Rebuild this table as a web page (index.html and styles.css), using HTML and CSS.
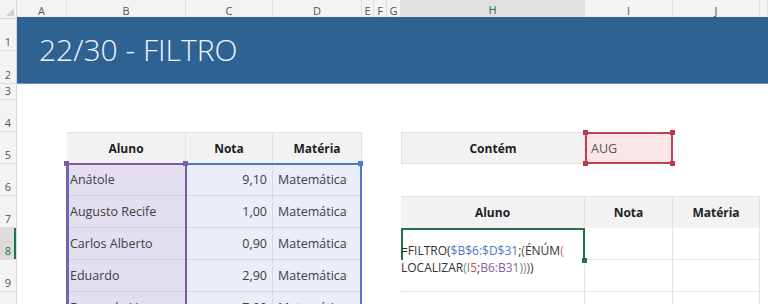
FILE: index.html
```html
<!DOCTYPE html>
<html lang="pt">
<head>
<meta charset="utf-8">
<title>22/30 - FILTRO</title>
<link rel="stylesheet" href="styles.css">
</head>
<body>
<div class="app">
  <div class="colheads">
    <div class="corner"><span class="tri"></span></div>
    <div class="colh">A</div>
    <div class="colh">B</div>
    <div class="colh">C</div>
    <div class="colh">D</div>
    <div class="colh">E</div>
    <div class="colh">F</div>
    <div class="colh">G</div>
    <div class="colh sel">H</div>
    <div class="colh">I</div>
    <div class="colh">J</div>
    <div class="colh"></div>
  </div>
  <div class="main">
    <div class="rowheads">
      <div class="rowh">1</div>
      <div class="rowh">2</div>
      <div class="rowh">3</div>
      <div class="rowh">4</div>
      <div class="rowh">5</div>
      <div class="rowh">6</div>
      <div class="rowh">7</div>
      <div class="rowh sel">8</div>
      <div class="rowh">9</div>
      <div class="rowh"></div>
    </div>
    <div class="cells">
      <div class="banner"><span class="title">22/30 - FILTRO</span></div>

      <div class="ltable">
        <div class="th">Aluno</div>
        <div class="th">Nota</div>
        <div class="th">Matéria</div>

        <div class="td name">Anátole</div>
        <div class="td num">9,10</div>
        <div class="td subj">Matemática</div>

        <div class="td name">Augusto Recife</div>
        <div class="td num">1,00</div>
        <div class="td subj">Matemática</div>

        <div class="td name">Carlos Alberto</div>
        <div class="td num">0,90</div>
        <div class="td subj">Matemática</div>

        <div class="td name">Eduardo</div>
        <div class="td num">2,90</div>
        <div class="td subj">Matemática</div>

        <div class="td name">Fernanda Lima</div>
        <div class="td num">7,00</div>
        <div class="td subj">Matemática</div>

        <div class="ref ref-blue"></div>
        <div class="ref ref-purple"></div>
        <span class="hnd hp1"></span>
        <span class="hnd hp2"></span>
        <span class="hnd hb1"></span>
      </div>

      <div class="contem">
        <div class="ch">Contém</div>
        <div class="cv">AUG
          <span class="hnd hr tl"></span>
          <span class="hnd hr tr"></span>
          <span class="hnd hr bl"></span>
          <span class="hnd hr br"></span>
        </div>
      </div>

      <div class="rtable">
        <div class="rth">Aluno</div>
        <div class="rth">Nota</div>
        <div class="rth">Matéria</div>

        <div class="active">
          <div class="editor">
            <div>=FILTRO(<span class="fb">$B$6:$D$31</span>;<span class="p1">(</span>ÉNÚM<span class="p2">(</span></div>
            <div>LOCALIZAR<span class="p3">(</span><span class="fr">I5</span>;<span class="fp">B6:B31</span><span class="p3">)</span><span class="p2">)</span><span class="p1">)</span>)</div>
          </div>
          <span class="hnd hg"></span>
        </div>
        <div class="rtd"></div>
        <div class="rtd"></div>

        <div class="rtd"></div>
        <div class="rtd"></div>
        <div class="rtd"></div>

        <div class="rtd"></div>
        <div class="rtd"></div>
        <div class="rtd"></div>
      </div>
    </div>
  </div>
</div>
</body>
</html>
```
FILE: styles.css
```css
* { box-sizing: border-box; }

body {
  margin: 0;
  width: 768px;
  height: 304px;
  overflow: hidden;
  background: #ffffff;
  font-family: "Open Sans", "DejaVu Sans", sans-serif;
}

.app {
  display: flex;
  flex-direction: column;
  width: 768px;
}

/* column headers */
.colheads {
  display: grid;
  grid-template-columns: 17px 50px 119px 87px 89px 12px 13px 14px 184px 88px 87px 1fr;
  height: 17px;
  background: #f3f3f3;
}

.corner {
  position: relative;
  border-right: 1px solid #d6d6d6;
  border-bottom: 1px solid #d6d6d6;
}

.tri {
  position: absolute;
  right: 2px;
  bottom: 2px;
  width: 0;
  height: 0;
  border-left: 8px solid transparent;
  border-bottom: 8px solid #d0d0d0;
}

.colh {
  display: flex;
  align-items: center;
  justify-content: center;
  padding-top: 2px;
  font-size: 11px;
  color: #555555;
  border-right: 1px solid #e0e0e0;
  border-bottom: 1px solid #d6d6d6;
}

.colh.sel {
  background: #e1e1e1;
  color: #217346;
  border-bottom: 2px solid #217346;
}

/* body */
.main {
  display: flex;
}

.rowheads {
  display: grid;
  grid-template-rows: 34px 33px 16px repeat(7, 32px);
  width: 17px;
  flex: none;
  background: #f3f3f3;
  border-right: 1px solid #d6d6d6;
}

.rowh {
  display: flex;
  align-items: flex-end;
  justify-content: center;
  padding-bottom: 1px;
  font-size: 11px;
  line-height: 14px;
  color: #555555;
  border-bottom: 1px solid #e0e0e0;
}

.rowh.sel {
  background: #dcdcdc;
  color: #217346;
  box-shadow: inset -2px 0 0 #217346;
}

.cells {
  flex: 1;
  display: grid;
  grid-template-columns: 50px 119px 87px 89px 12px 13px 14px 184px 88px 87px 1fr;
  grid-template-rows: 34px 33px 16px repeat(7, 32px);
}

.banner {
  grid-column: 1 / -1;
  grid-row: 1 / 3;
  display: flex;
  align-items: center;
  padding-left: 22px;
  background: #2e6292;
  border-bottom: 1px solid #6f94b8;
}

.title {
  font-size: 30px;
  font-weight: 300;
  line-height: 30px;
  color: #eef4fa;
}

/* left table */
.ltable {
  grid-column: 2 / 5;
  grid-row: 5 / 11;
  display: grid;
  grid-template-columns: 119px 87px 89px;
  grid-template-rows: repeat(6, 32px);
  position: relative;
}

.th, .rth, .ch {
  display: flex;
  align-items: center;
  justify-content: center;
  background: #f2f2f2;
  font-size: 12px;
  font-weight: 700;
  color: #1e1e1e;
  border-top: 1px solid #e3e3e3;
  border-right: 1px solid #e3e3e3;
}

.td {
  display: flex;
  align-items: center;
  font-size: 12.5px;
  color: #404040;
  white-space: nowrap;
  border-bottom: 1px solid #d3d9e6;
}

.td.name {
  padding-left: 3px;
  background: #e4dff0;
  border-bottom-color: #d2cce2;
}

.td.num {
  justify-content: flex-end;
  padding-right: 5px;
  background: #e9eef8;
  border-right: 1px solid #d3d9e6;
}

.td.subj {
  padding-left: 5px;
  background: #e9eef8;
}

.ref {
  position: absolute;
  top: 31px;
  bottom: 0;
  border: 2px solid;
  border-bottom: none;
}

.ref-blue {
  left: 0;
  right: 0;
  border-color: #4a7bc8;
}

.ref-purple {
  left: -1px;
  width: 121px;
  border-color: #7d5ca6;
}

.hnd {
  position: absolute;
  width: 5px;
  height: 5px;
}

.hp1 { left: -3px; top: 29px; background: #7d5ca6; }
.hp2 { left: 116px; top: 29px; background: #7d5ca6; }
.hb1 { left: 291px; top: 29px; background: #4a7bc8; }

/* Contém */
.contem {
  grid-column: 8 / 10;
  grid-row: 5;
  display: grid;
  grid-template-columns: 184px 88px;
}

.ch {
  border: 1px solid #e3e3e3;
}

.cv {
  position: relative;
  display: flex;
  align-items: center;
  padding-left: 4px;
  font-size: 12.5px;
  color: #555555;
  background: #fbe5e7;
  border: 2px solid #c0414f;
}

.hr { background: #b8394a; }
.hr.tl { left: -4px; top: -4px; }
.hr.tr { right: -4px; top: -4px; }
.hr.bl { left: -4px; bottom: -4px; }
.hr.br { right: -4px; bottom: -4px; }

/* right table */
.rtable {
  grid-column: 8 / 11;
  grid-row: 7 / 11;
  display: grid;
  grid-template-columns: 184px 88px 87px;
  grid-template-rows: repeat(4, 32px);
}

.rtd {
  border-right: 1px solid #e3e3e3;
  border-bottom: 1px solid #e3e3e3;
}

.active {
  position: relative;
  border: 2px solid #217346;
  border-bottom: none;
}

.editor {
  position: absolute;
  left: -2px;
  top: 12px;
  font-size: 12px;
  line-height: 17px;
  color: #333333;
  white-space: nowrap;
}

.fb { color: #4a7bc8; }
.fr { color: #c8504f; }
.fp { color: #8064a2; }
.p1 { color: #7a5a3a; }
.p2 { color: #b6679a; }
.p3 { color: #4f9d6a; }

.hg {
  right: -4px;
  bottom: -3px;
  background: #217346;
}
```
